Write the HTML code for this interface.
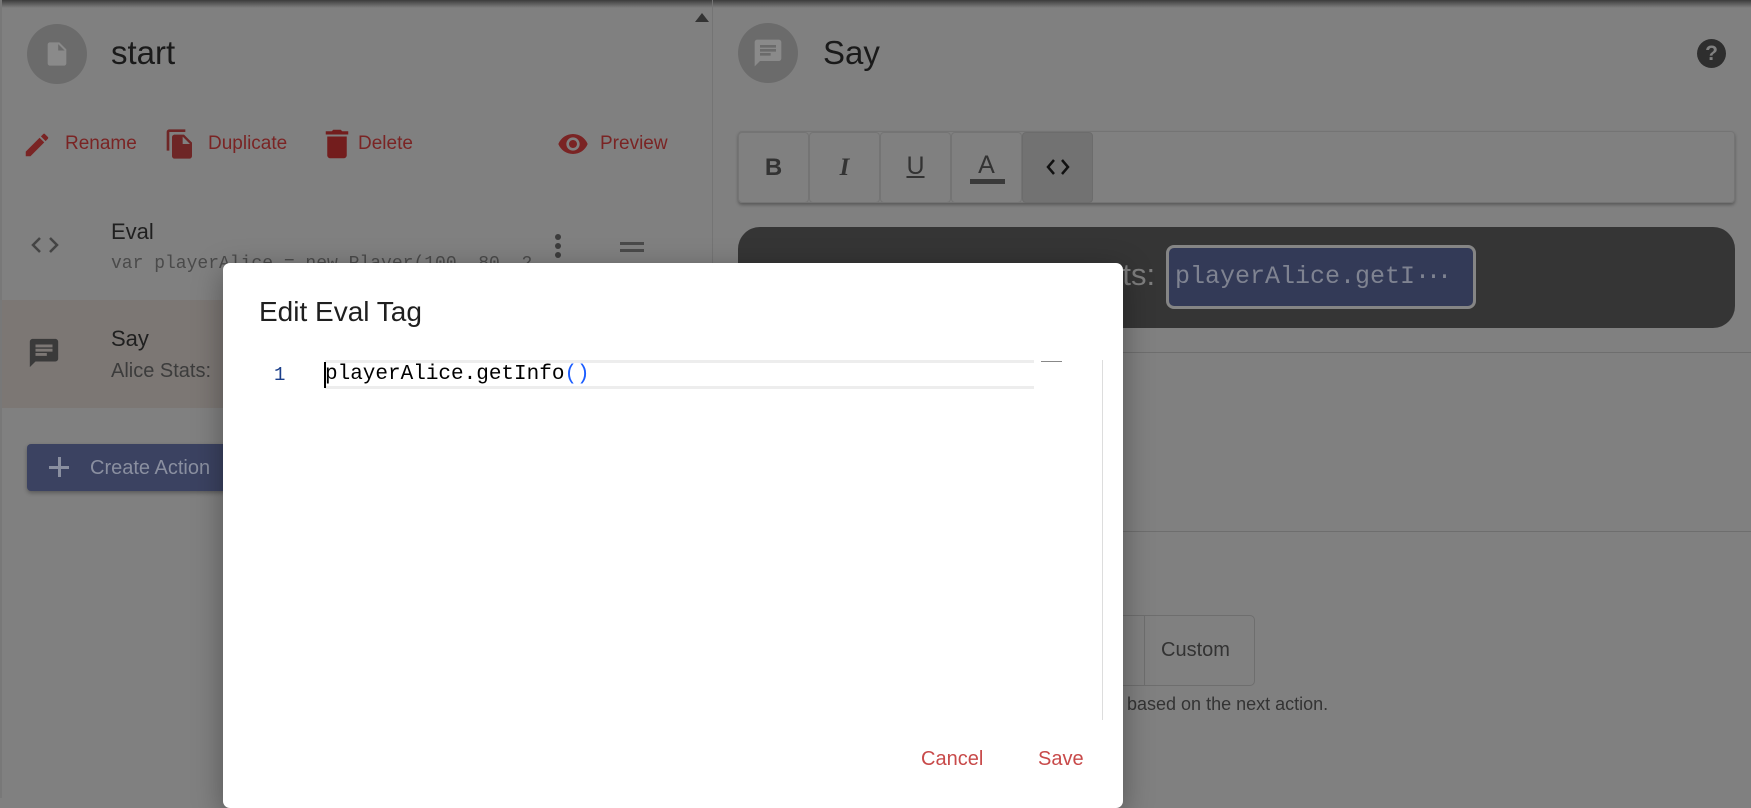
<!DOCTYPE html>
<html><head><meta charset="utf-8"><style>
*{margin:0;padding:0;box-sizing:border-box}
body{width:1751px;height:798px;overflow:hidden;background:#808080;font-family:"Liberation Sans",sans-serif;position:relative}
.a{position:absolute}
.t{position:absolute;white-space:nowrap}
.red{color:#7a2424;font-size:19px}
</style></head><body>
<div class="a" style="left:0;top:0;width:1751px;height:8px;background:linear-gradient(#3c3c3c,#808080)"></div>
<div class="a" style="left:712px;top:0;width:1px;height:798px;background:#747474"></div>
<div class="a" style="left:0;top:0;width:2px;height:798px;background:#787878"></div>
<div class="a" style="left:695px;top:13px;width:0;height:0;border-left:7px solid transparent;border-right:7px solid transparent;border-bottom:9px solid #333"></div>
<div class="a" style="left:27px;top:24px;width:60px;height:60px;border-radius:50%;background:#6b6b6b"></div>
<svg class="a" style="left:43px;top:40px" width="28" height="28" viewBox="0 0 24 24"><path fill="#8a8a8a" d="M6 2c-1.1 0-2 .9-2 2v16c0 1.1.9 2 2 2h12c1.1 0 2-.9 2-2V8l-6-6H6zm7 7V3.5L18.5 9H13z"/></svg>
<div class="t" style="left:111px;top:34px;font-size:33px;color:#1a1a1a">start</div>
<svg class="a" style="left:22px;top:130px" width="30" height="30" viewBox="0 0 24 24"><path fill="#7a2424" d="M3 17.25V21h3.75L17.81 9.94l-3.75-3.75L3 17.25zM20.71 7.04a1 1 0 000-1.41l-2.34-2.34a1 1 0 00-1.41 0l-1.83 1.83 3.75 3.75 1.83-1.83z"/></svg>
<div class="t red" style="left:65px;top:133px">Rename</div>
<svg class="a" style="left:164px;top:128px" width="32" height="32" viewBox="0 0 24 24"><path fill="#6e2626" d="M16 1H4c-1.1 0-2 .9-2 2v14h2V3h12V1zm-1 4l6 6v10c0 1.1-.9 2-2 2H7.99C6.89 23 6 22.1 6 21l.01-14c0-1.1.89-2 1.99-2h7zm-1 7h5.5L14 6.5V12z"/></svg>
<div class="t red" style="left:208px;top:133px">Duplicate</div>
<svg class="a" style="left:319px;top:126px" width="36" height="36" viewBox="0 0 24 24"><path fill="#731d1d" d="M5.5 19.5c0 1.1.9 2 2 2h9c1.1 0 2-.9 2-2V7h-13v12.5zM19.5 3.5h-4l-1-1h-5l-1 1h-4v2.2h15z"/></svg>
<div class="t red" style="left:358px;top:133px">Delete</div>
<svg class="a" style="left:557px;top:128px" width="32" height="32" viewBox="0 0 24 24"><path fill="#7a2424" d="M12 4.5C7 4.5 2.73 7.61 1 12c1.73 4.39 6 7.5 11 7.5s9.27-3.11 11-7.5c-1.73-4.39-6-7.5-11-7.5zM12 17c-2.76 0-5-2.24-5-5s2.24-5 5-5 5 2.24 5 5-2.24 5-5 5zm0-8c-1.66 0-3 1.34-3 3s1.34 3 3 3 3-1.34 3-3-1.34-3-3-3z"/></svg>
<div class="t red" style="left:600px;top:133px">Preview</div>
<svg class="a" style="left:28px;top:232px" width="34" height="26" viewBox="0 0 34 26"><path d="M12 6l-7 7 7 7M22 6l7 7-7 7" stroke="#444" stroke-width="2.5" fill="none"/></svg>
<div class="t" style="left:111px;top:219px;font-size:22px;color:#1f1f1f">Eval</div>
<div class="t" style="left:111px;top:254px;font-size:18px;color:#4a4a4a;font-family:'Liberation Mono',monospace">var playerAlice = new Player(100, 80, 2</div>
<div class="a" style="left:555px;top:234px;width:6px;height:6px;border-radius:50%;background:#3c3c3c;box-shadow:0 9px 0 #3c3c3c,0 18px 0 #3c3c3c"></div>
<div class="a" style="left:620px;top:242px;width:24px;height:3px;background:#4a4a4a;box-shadow:0 7px 0 #4a4a4a"></div>
<div class="a" style="left:2px;top:300px;width:710px;height:108px;background:#7c7774"></div>
<svg class="a" style="left:27px;top:336px" width="34" height="34" viewBox="0 0 24 24"><path fill="#3a3a3a" d="M20 2H4c-1.1 0-2 .9-2 2v18l4-4h14c1.1 0 2-.9 2-2V4c0-1.1-.9-2-2-2zM6 9h12v2H6V9zm8 5H6v-2h8v2zm4-6H6V6h12v2z"/></svg>
<div class="t" style="left:111px;top:326px;font-size:22px;color:#1f1f1f">Say</div>
<div class="t" style="left:111px;top:360px;font-size:20px;color:#3c3c3c">Alice Stats:</div>
<div class="a" style="left:27px;top:444px;width:210px;height:47px;background:#3b4261;border-radius:4px;box-shadow:0 2px 4px rgba(0,0,0,.3)"></div>
<div class="a" style="left:49px;top:466px;width:20px;height:3px;background:#8a8fa0"></div>
<div class="a" style="left:58px;top:457px;width:3px;height:20px;background:#8a8fa0"></div>
<div class="t" style="left:90px;top:457px;font-size:20px;color:#8a8fa0">Create Action</div>
<div class="a" style="left:738px;top:23px;width:60px;height:60px;border-radius:50%;background:#6b6b6b"></div>
<svg class="a" style="left:752px;top:37px" width="32" height="32" viewBox="0 0 24 24"><path fill="#8a8a8a" d="M20 2H4c-1.1 0-2 .9-2 2v18l4-4h14c1.1 0 2-.9 2-2V4c0-1.1-.9-2-2-2zM6 9h12v2H6V9zm8 5H6v-2h8v2zm4-6H6V6h12v2z"/></svg>
<div class="t" style="left:823px;top:34px;font-size:33px;color:#1a1a1a">Say</div>
<div class="a" style="left:1697px;top:39px;width:29px;height:29px;border-radius:50%;background:#2e2e2e;color:#808080;font-weight:bold;font-size:21px;text-align:center;line-height:29px">?</div>
<div class="a" style="left:738px;top:131px;width:997px;height:72px;border:1px solid #747474;border-radius:4px;box-shadow:0 2px 3px rgba(0,0,0,.3)"></div>
<div class="a" style="left:738px;top:132px;width:71px;height:71px;border:1px solid #747474;border-radius:4px;text-align:center;line-height:70px;font-weight:bold;font-size:24px;color:#333">B</div>
<div class="a" style="left:809px;top:132px;width:71px;height:71px;border:1px solid #747474;border-radius:4px;text-align:center;line-height:70px;font-weight:bold;font-style:italic;font-size:25px;color:#333;font-family:'Liberation Serif',serif">I</div>
<div class="a" style="left:880px;top:132px;width:71px;height:71px;border:1px solid #747474;border-radius:4px;text-align:center;line-height:66px;font-size:25px;color:#333"><span style="text-decoration:underline">U</span></div>
<div class="a" style="left:951px;top:132px;width:71px;height:71px;border:1px solid #747474;border-radius:4px;text-align:center;line-height:64px;font-size:25px;color:#333">A</div>
<div class="a" style="left:970px;top:179px;width:35px;height:5px;background:#3a3a3a"></div>
<div class="a" style="left:1022px;top:132px;width:71px;height:71px;border:1px solid #6c6c6c;border-radius:4px;background:#727272"></div>
<svg class="a" style="left:1044px;top:154px" width="28" height="26" viewBox="0 0 28 26"><path d="M10 6l-6 7 6 7M18 6l6 7-6 7" stroke="#111" stroke-width="2.5" fill="none"/></svg>
<div class="a" style="left:738px;top:227px;width:997px;height:101px;background:#353535;border-radius:22px"></div>
<div class="t" style="left:1000px;top:257px;font-size:31px;color:#7d7d7d">Alice Stats:</div>
<div class="a" style="left:1166px;top:245px;width:310px;height:64px;background:#333a57;border:3px solid #858585;border-radius:8px;overflow:hidden">
<div class="t" style="left:6px;top:14px;font-size:25px;color:#7f8391;font-family:'Liberation Mono',monospace">playerAlice.getI<span style="letter-spacing:-4px">···</span></div></div>
<div class="a" style="left:713px;top:352px;width:1038px;height:1px;background:#6e6e6e"></div>
<div class="a" style="left:713px;top:531px;width:1038px;height:1px;background:#6e6e6e"></div>
<div class="a" style="left:1080px;top:615px;width:175px;height:71px;border:1px solid #6e6e6e;border-radius:5px"></div>
<div class="a" style="left:1144px;top:615px;width:1px;height:71px;background:#6e6e6e"></div>
<div class="t" style="left:1161px;top:639px;font-size:20px;color:#333">Custom</div>
<div class="t" style="left:1127px;top:694px;font-size:18px;color:#333">based on the next action.</div>
<div class="a" style="left:223px;top:263px;width:900px;height:545px;background:#fff;border-radius:7px;box-shadow:0 8px 30px rgba(0,0,0,.35)"></div>
<div class="t" style="left:259px;top:296px;font-size:28px;color:#1f1f1f">Edit Eval Tag</div>
<div class="a" style="left:325px;top:360px;width:709px;height:29px;border-top:3px solid #ededed;border-bottom:3px solid #ededed"></div>
<div class="t" style="left:274px;top:364px;font-size:19px;color:#1b3f8a;font-family:'Liberation Mono',monospace">1</div>
<div class="a" style="left:324px;top:362px;width:2px;height:26px;background:#000"></div>
<div class="t" style="left:325px;top:363px;font-size:21px;color:#000;font-family:'Liberation Mono',monospace">playerAlice.getInfo<span style="color:#1a5cff">()</span></div>
<div class="a" style="left:1041px;top:361px;width:21px;height:1px;background:#888"></div>
<div class="a" style="left:1102px;top:360px;width:1px;height:360px;background:#ddd"></div>
<div class="t" style="left:921px;top:748px;font-size:20px;color:#c84a4a">Cancel</div>
<div class="t" style="left:1038px;top:748px;font-size:20px;color:#c84a4a">Save</div>
</body></html>
